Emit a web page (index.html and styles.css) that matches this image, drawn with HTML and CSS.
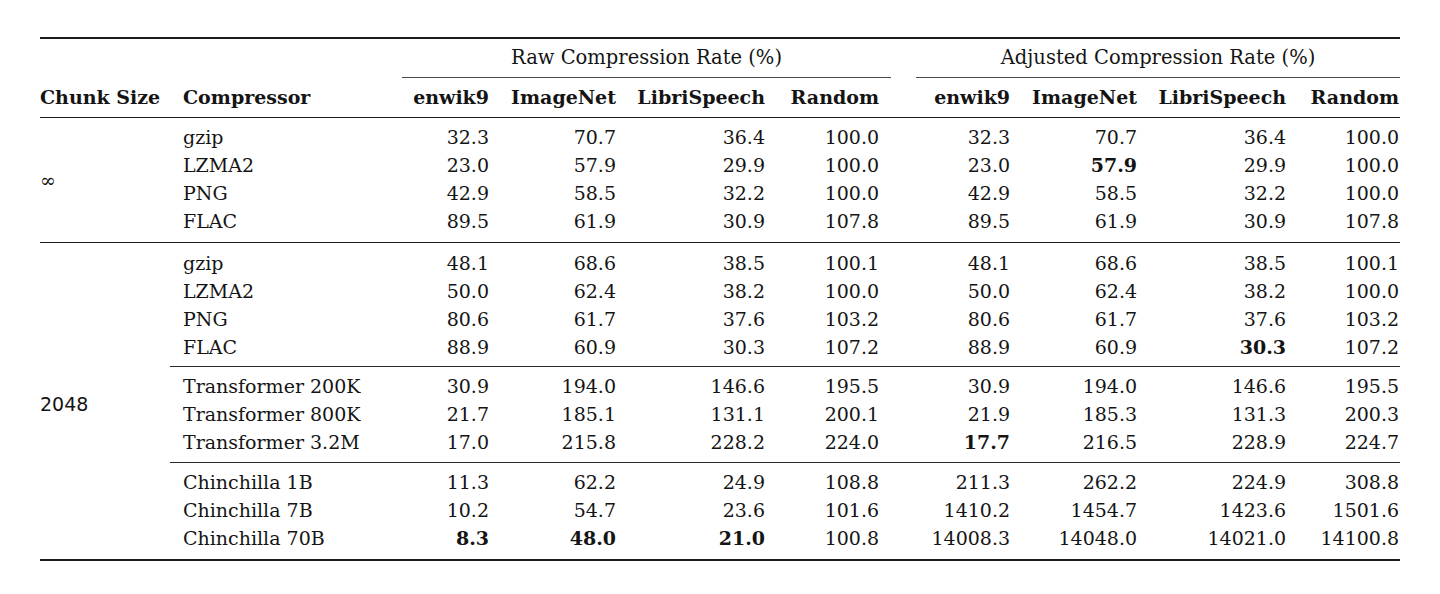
FILE: index.html
```html
<!DOCTYPE html>
<html lang="en">
<head>
<meta charset="utf-8">
<title>Compression rates</title>
<link rel="stylesheet" href="styles.css">
</head>
<body>
<table class="results">
  <colgroup>
    <col class="c-chunk"><col class="c-comp">
    <col class="c-r1"><col class="c-r2"><col class="c-r3"><col class="c-r4">
    <col class="c-gap">
    <col class="c-a1"><col class="c-a2"><col class="c-a3"><col class="c-a4">
  </colgroup>
  <thead>
    <tr class="group-row">
      <th></th><th></th>
      <th colspan="4" class="group">Raw Compression Rate (%)</th>
      <th class="gap"></th>
      <th colspan="4" class="group">Adjusted Compression Rate (%)</th>
    </tr>
    <tr class="head-row">
      <th class="left h-chunk">Chunk Size</th>
      <th class="left h-comp">Compressor</th>
      <th>enwik9</th><th>ImageNet</th><th>LibriSpeech</th><th>Random</th>
      <th class="gap"></th>
      <th>enwik9</th><th>ImageNet</th><th>LibriSpeech</th><th class="last">Random</th>
    </tr>
  </thead>
  <tbody>
    <tr class="first">
      <td rowspan="4" class="chunk inf rule-full">∞</td>
      <td class="comp">gzip</td><td>32.3</td><td>70.7</td><td>36.4</td><td>100.0</td><td class="gap"></td><td>32.3</td><td>70.7</td><td>36.4</td><td class="last">100.0</td>
    </tr>
    <tr>
      <td class="comp">LZMA2</td><td>23.0</td><td>57.9</td><td>29.9</td><td>100.0</td><td class="gap"></td><td>23.0</td><td><b>57.9</b></td><td>29.9</td><td class="last">100.0</td>
    </tr>
    <tr>
      <td class="comp">PNG</td><td>42.9</td><td>58.5</td><td>32.2</td><td>100.0</td><td class="gap"></td><td>42.9</td><td>58.5</td><td>32.2</td><td class="last">100.0</td>
    </tr>
    <tr class="end-full">
      <td class="comp">FLAC</td><td>89.5</td><td>61.9</td><td>30.9</td><td>107.8</td><td class="gap"></td><td>89.5</td><td>61.9</td><td>30.9</td><td class="last">107.8</td>
    </tr>

    <tr class="first s2">
      <td rowspan="10" class="chunk num-label">2048</td>
      <td class="comp">gzip</td><td>48.1</td><td>68.6</td><td>38.5</td><td>100.1</td><td class="gap"></td><td>48.1</td><td>68.6</td><td>38.5</td><td class="last">100.1</td>
    </tr>
    <tr>
      <td class="comp">LZMA2</td><td>50.0</td><td>62.4</td><td>38.2</td><td>100.0</td><td class="gap"></td><td>50.0</td><td>62.4</td><td>38.2</td><td class="last">100.0</td>
    </tr>
    <tr>
      <td class="comp">PNG</td><td>80.6</td><td>61.7</td><td>37.6</td><td>103.2</td><td class="gap"></td><td>80.6</td><td>61.7</td><td>37.6</td><td class="last">103.2</td>
    </tr>
    <tr class="end-part s2end">
      <td class="comp">FLAC</td><td>88.9</td><td>60.9</td><td>30.3</td><td>107.2</td><td class="gap"></td><td>88.9</td><td>60.9</td><td><b>30.3</b></td><td class="last">107.2</td>
    </tr>

    <tr class="first s3">
      <td class="comp">Transformer 200K</td><td>30.9</td><td>194.0</td><td>146.6</td><td>195.5</td><td class="gap"></td><td>30.9</td><td>194.0</td><td>146.6</td><td class="last">195.5</td>
    </tr>
    <tr>
      <td class="comp">Transformer 800K</td><td>21.7</td><td>185.1</td><td>131.1</td><td>200.1</td><td class="gap"></td><td>21.9</td><td>185.3</td><td>131.3</td><td class="last">200.3</td>
    </tr>
    <tr class="end-part s3end">
      <td class="comp">Transformer 3.2M</td><td>17.0</td><td>215.8</td><td>228.2</td><td>224.0</td><td class="gap"></td><td><b>17.7</b></td><td>216.5</td><td>228.9</td><td class="last">224.7</td>
    </tr>

    <tr class="first s4">
      <td class="comp">Chinchilla 1B</td><td>11.3</td><td>62.2</td><td>24.9</td><td>108.8</td><td class="gap"></td><td>211.3</td><td>262.2</td><td>224.9</td><td class="last">308.8</td>
    </tr>
    <tr>
      <td class="comp">Chinchilla 7B</td><td>10.2</td><td>54.7</td><td>23.6</td><td>101.6</td><td class="gap"></td><td>1410.2</td><td>1454.7</td><td>1423.6</td><td class="last">1501.6</td>
    </tr>
    <tr class="end-last">
      <td class="comp">Chinchilla 70B</td><td><b>8.3</b></td><td><b>48.0</b></td><td><b>21.0</b></td><td>100.8</td><td class="gap"></td><td>14008.3</td><td>14048.0</td><td>14021.0</td><td class="last">14100.8</td>
    </tr>
  </tbody>
</table>
</body>
</html>
```

FILE: styles.css
```css
html, body {
  margin: 0;
  padding: 0;
  background: #ffffff;
}

body {
  color: #141414;
  font-family: "DejaVu Serif", "Liberation Serif", serif;
  font-size: 19px;
}

.results {
  margin: 37px 0 0 40px;
  width: 1360px;
  table-layout: fixed;
  border-collapse: separate;
  border-spacing: 0;
  border-top: 2px solid #1c1c1c;
  border-bottom: 2px solid #1c1c1c;
}

.c-chunk { width: 130px; }
.c-comp { width: 232px; }
.c-r1 { width: 99px; }
.c-r2 { width: 127px; }
.c-r3 { width: 149px; }
.c-r4 { width: 114px; }
.c-gap { width: 25px; }
.c-a1 { width: 106px; }
.c-a2 { width: 127px; }
.c-a3 { width: 149px; }
.c-a4 { width: 102px; }

.results th,
.results td {
  padding: 0 12px 0 0;
  line-height: 28px;
  height: 28px;
  text-align: right;
  white-space: nowrap;
  vertical-align: top;
}

.results th.last,
.results td.last {
  padding-right: 1px;
}

.results .gap {
  padding-left: 0;
  padding-right: 0;
}

.results th {
  font-weight: bold;
}

.results b {
  font-weight: bold;
}

/* group header row */
.group-row th {
  padding-top: 5px;
  padding-bottom: 5px;
}

.group-row th.group {
  font-weight: normal;
  font-size: 19.5px;
  text-align: center;
  padding-right: 0;
  border-bottom: 1px solid #4a4a4a;
}

/* column header row */
.head-row th {
  padding-top: 5px;
  padding-bottom: 6px;
  border-bottom: 1px solid #1c1c1c;
}

.results .left {
  text-align: left;
}

.results th.h-chunk {
  padding-left: 0;
  padding-right: 0;
}

.results th.h-comp {
  padding-left: 13px;
  padding-right: 0;
}

.results .chunk {
  text-align: left;
  padding-left: 0;
  padding-right: 0;
}

.results .comp {
  text-align: left;
  padding-left: 13px;
  padding-right: 0;
}

.results td.inf {
  vertical-align: middle;
  padding-top: 6px;
}

.results td.num-label {
  font-family: "DejaVu Sans", "Liberation Sans", sans-serif;
  vertical-align: middle;
  padding-top: 8px;
  padding-bottom: 0;
  border-bottom: none;
}

/* section spacing (booktabs-like) */
.first td {
  padding-top: 5px;
}

.first.s2 td {
  padding-top: 6px;
}

.end-full td,
.results td.rule-full {
  padding-bottom: 7px;
  border-bottom: 1px solid #1c1c1c;
}

.end-part td {
  border-bottom: 1px solid #2a2a2a;
}

.s2end td {
  padding-bottom: 5px;
}

.s3end td {
  padding-bottom: 6px;
}

.end-last td {
  padding-bottom: 7px;
}
```
